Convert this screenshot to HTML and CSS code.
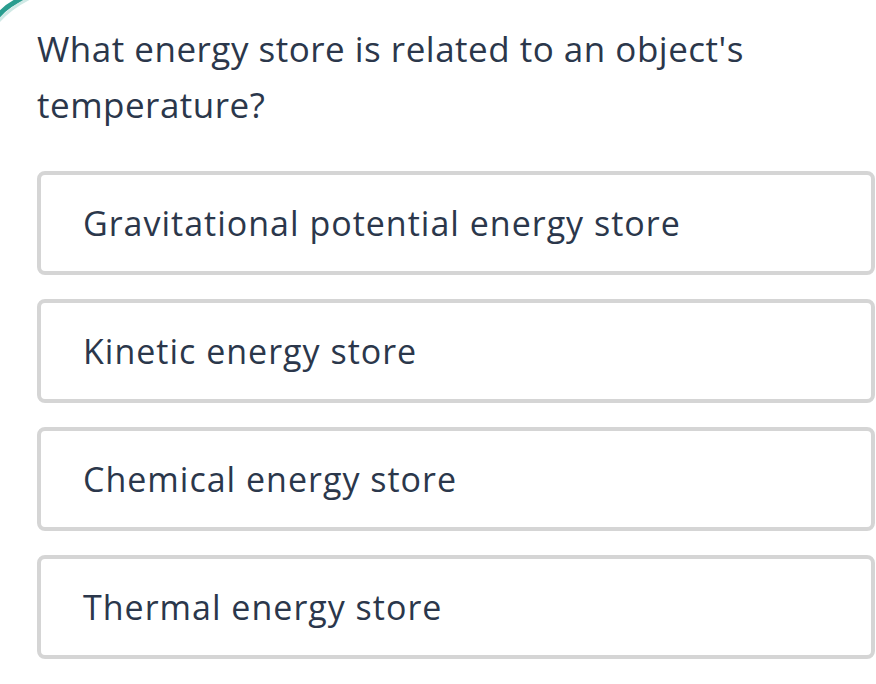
FILE: index.html
```html
<!DOCTYPE html>
<html lang="en">
<head>
<meta charset="utf-8">
<title>Question</title>
<link rel="stylesheet" href="styles.css">
</head>
<body>
<svg class="corner" width="40" height="30" viewBox="0 0 40 30" aria-hidden="true">
  <path d="M-2 16 Q 8 4 24 -2" fill="none" stroke="#2a9d8f" stroke-width="5"/>
  <path d="M-2 22 Q 10 8 30 -2" fill="none" stroke="#cfe9e5" stroke-width="3"/>
</svg>
<main class="quiz">
  <h1 class="question">What energy store is related to an object's temperature?</h1>
  <div class="options">
    <div class="option">Gravitational potential energy store</div>
    <div class="option">Kinetic energy store</div>
    <div class="option">Chemical energy store</div>
    <div class="option">Thermal energy store</div>
  </div>
</main>
</body>
</html>
```
FILE: styles.css
```css
html, body {
  margin: 0;
  padding: 0;
  background: #ffffff;
}
body {
  font-family: "Open Sans", "Noto Sans", sans-serif;
  color: #2b374b;
  width: 876px;
  height: 684px;
  overflow: hidden;
  position: relative;
}
.corner {
  position: absolute;
  left: 0;
  top: 0;
}
.quiz {
  padding: 21px 1px 0 37px;
}
.question {
  margin: 0;
  font-size: 35px;
  font-weight: 400;
  line-height: 56px;
  letter-spacing: 0.5px;
  width: 780px;
}
.options {
  margin-top: 38px;
  display: flex;
  flex-direction: column;
  gap: 24px;
}
.option {
  height: 96px;
  border: 4px solid #d5d5d5;
  border-radius: 8px;
  display: flex;
  align-items: center;
  padding-left: 42px;
  font-size: 34px;
  letter-spacing: 1px;
}
```
